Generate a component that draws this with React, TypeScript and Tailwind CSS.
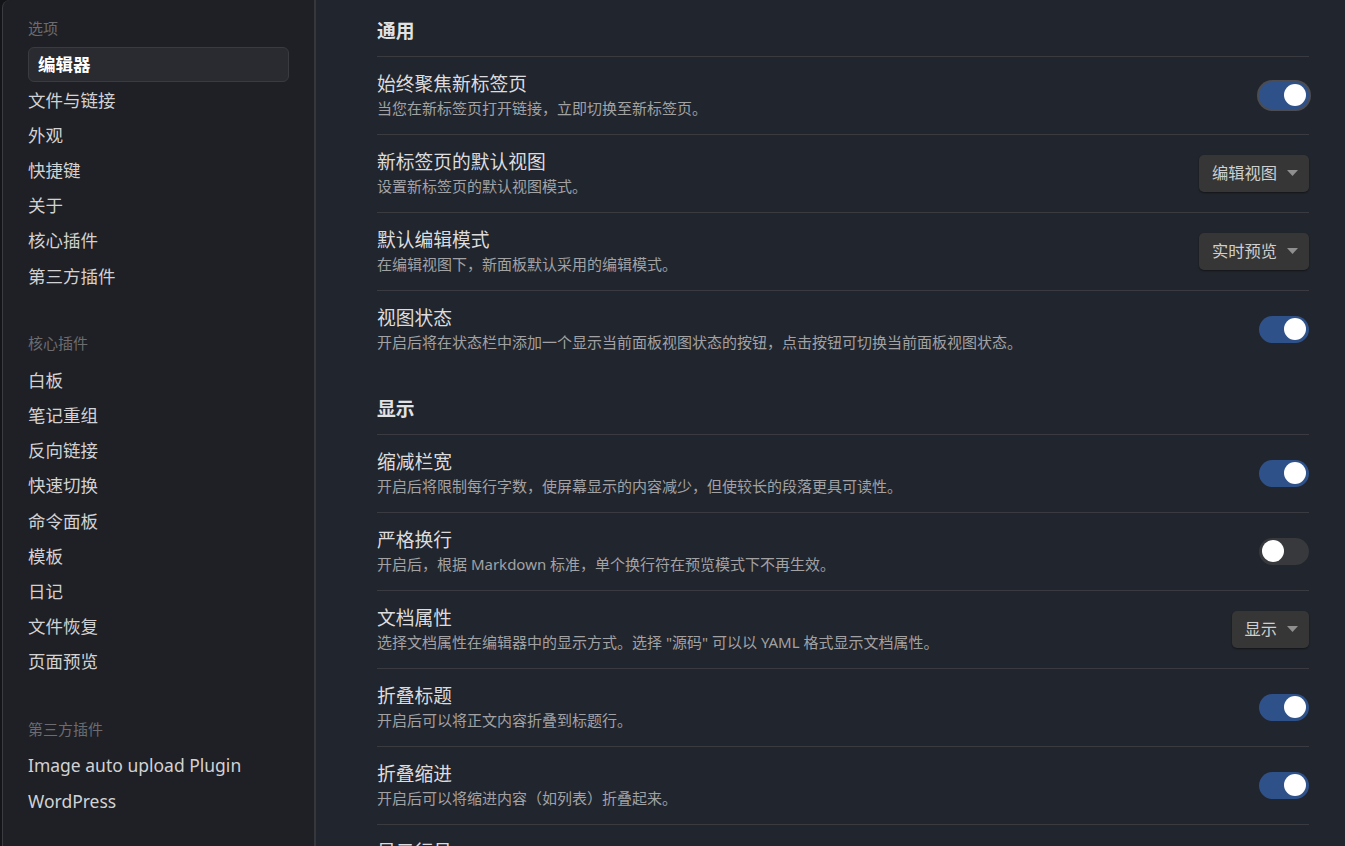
import React from 'react';

type Control =
  | { kind: 'toggle'; on: boolean; focused?: boolean }
  | { kind: 'select'; value: string };

interface SettingRow {
  title: string;
  desc: string;
  control: Control;
}

interface SettingSection {
  heading: string;
  rows: SettingRow[];
}

const navGroups: { label: string; items: string[] }[] = [
  { label: '选项', items: ['编辑器', '文件与链接', '外观', '快捷键', '关于', '核心插件', '第三方插件'] },
  {
    label: '核心插件',
    items: ['白板', '笔记重组', '反向链接', '快速切换', '命令面板', '模板', '日记', '文件恢复', '页面预览'],
  },
  { label: '第三方插件', items: ['Image auto upload Plugin', 'WordPress'] },
];

const sections: SettingSection[] = [
  {
    heading: '通用',
    rows: [
      {
        title: '始终聚焦新标签页',
        desc: '当您在新标签页打开链接，立即切换至新标签页。',
        control: { kind: 'toggle', on: true, focused: true },
      },
      {
        title: '新标签页的默认视图',
        desc: '设置新标签页的默认视图模式。',
        control: { kind: 'select', value: '编辑视图' },
      },
      {
        title: '默认编辑模式',
        desc: '在编辑视图下，新面板默认采用的编辑模式。',
        control: { kind: 'select', value: '实时预览' },
      },
      {
        title: '视图状态',
        desc: '开启后将在状态栏中添加一个显示当前面板视图状态的按钮，点击按钮可切换当前面板视图状态。',
        control: { kind: 'toggle', on: true },
      },
    ],
  },
  {
    heading: '显示',
    rows: [
      {
        title: '缩减栏宽',
        desc: '开启后将限制每行字数，使屏幕显示的内容减少，但使较长的段落更具可读性。',
        control: { kind: 'toggle', on: true },
      },
      {
        title: '严格换行',
        desc: '开启后，根据 Markdown 标准，单个换行符在预览模式下不再生效。',
        control: { kind: 'toggle', on: false },
      },
      {
        title: '文档属性',
        desc: '选择文档属性在编辑器中的显示方式。选择 "源码" 可以以 YAML 格式显示文档属性。',
        control: { kind: 'select', value: '显示' },
      },
      {
        title: '折叠标题',
        desc: '开启后可以将正文内容折叠到标题行。',
        control: { kind: 'toggle', on: true },
      },
      {
        title: '折叠缩进',
        desc: '开启后可以将缩进内容（如列表）折叠起来。',
        control: { kind: 'toggle', on: true },
      },
      {
        title: '显示行号',
        desc: '在编辑器左侧显示行号。',
        control: { kind: 'toggle', on: false },
      },
    ],
  },
];

function Toggle({ on, focused }: { on: boolean; focused?: boolean }) {
  return (
    <div
      className={`flex h-[27px] w-[50px] shrink-0 items-center rounded-full px-[3px] ${
        on ? 'justify-end bg-[#2f5189]' : 'justify-start bg-[#38393c]'
      } ${focused ? 'ring-[2px] ring-[#4b4d52]' : ''}`}
    >
      <div className="h-[22px] w-[22px] rounded-full bg-white" />
    </div>
  );
}

function Select({ value }: { value: string }) {
  return (
    <div className="flex h-[37px] shrink-0 items-center gap-[10px] rounded-[5px] bg-[#363636] pl-[13px] pr-[11px] text-[16.25px] text-[#cfcfcf] shadow-[0_1px_2px_rgba(0,0,0,0.45)]">
      <span className="leading-[22px]">{value}</span>
      <svg width="11" height="6" viewBox="0 0 11 6">
        <path d="M0 0 L11 0 L5.5 6 Z" fill="#8f8f8f" />
      </svg>
    </div>
  );
}

export default function App() {
  return (
    <div className="flex h-screen w-full overflow-hidden bg-[#141518] font-['Noto_Sans','Noto_Sans_CJK_SC',sans-serif]">
      {/* settings nav */}
      <aside className="ml-[2px] w-[314px] shrink-0 rounded-tl-[8px] border-l border-r-2 border-l-[#3b3c41] border-r-[#36373c] bg-[#1f2025] px-[25px]">
        {navGroups.map((group, gi) => (
          <div key={group.label} className={gi === 0 ? 'pt-[18px]' : 'mt-[40px]'}>
            <div className="mb-[9px] text-[15px] leading-[20px] text-[#6c6c70]">{group.label}</div>
            {group.items.map((item, i) => {
              const active = gi === 0 && i === 0;
              return (
                <div
                  key={item}
                  className={`flex h-[35.2px] items-center text-[17.5px] ${
                    active
                      ? 'rounded-[6px] border border-[#3a3b41] bg-[#2a2b31] px-[9px] font-bold text-white'
                      : 'text-[#d2d2d4]'
                  }`}
                >
                  {item}
                </div>
              );
            })}
          </div>
        ))}
      </aside>

      {/* settings content */}
      <main className="flex-1 overflow-hidden bg-[#21252d] pl-[61px] pr-[36px]">
        {sections.map((section, si) => (
          <section key={section.heading} className={si === 0 ? '' : 'mt-[10px]'}>
            <h2 className="border-b border-[#393b40] pb-[12px] pt-[18px] text-[18.75px] font-bold leading-[26px] text-[#e2e2e4]">
              {section.heading}
            </h2>
            {section.rows.map((row, ri) => (
              <div
                key={row.title}
                className={`flex items-center justify-between gap-6 pb-[15px] pt-[14px] ${
                  ri < section.rows.length - 1 ? 'border-b border-[#393b40]' : ''
                }`}
              >
                <div className="min-w-0">
                  <div className="text-[18.75px] leading-[26px] text-[#dcdcde]">{row.title}</div>
                  <div className="text-[15px] leading-[22px] text-[#a2a2a5]">{row.desc}</div>
                </div>
                {row.control.kind === 'toggle' ? (
                  <Toggle on={row.control.on} focused={row.control.focused} />
                ) : (
                  <Select value={row.control.value} />
                )}
              </div>
            ))}
          </section>
        ))}
      </main>
    </div>
  );
}
